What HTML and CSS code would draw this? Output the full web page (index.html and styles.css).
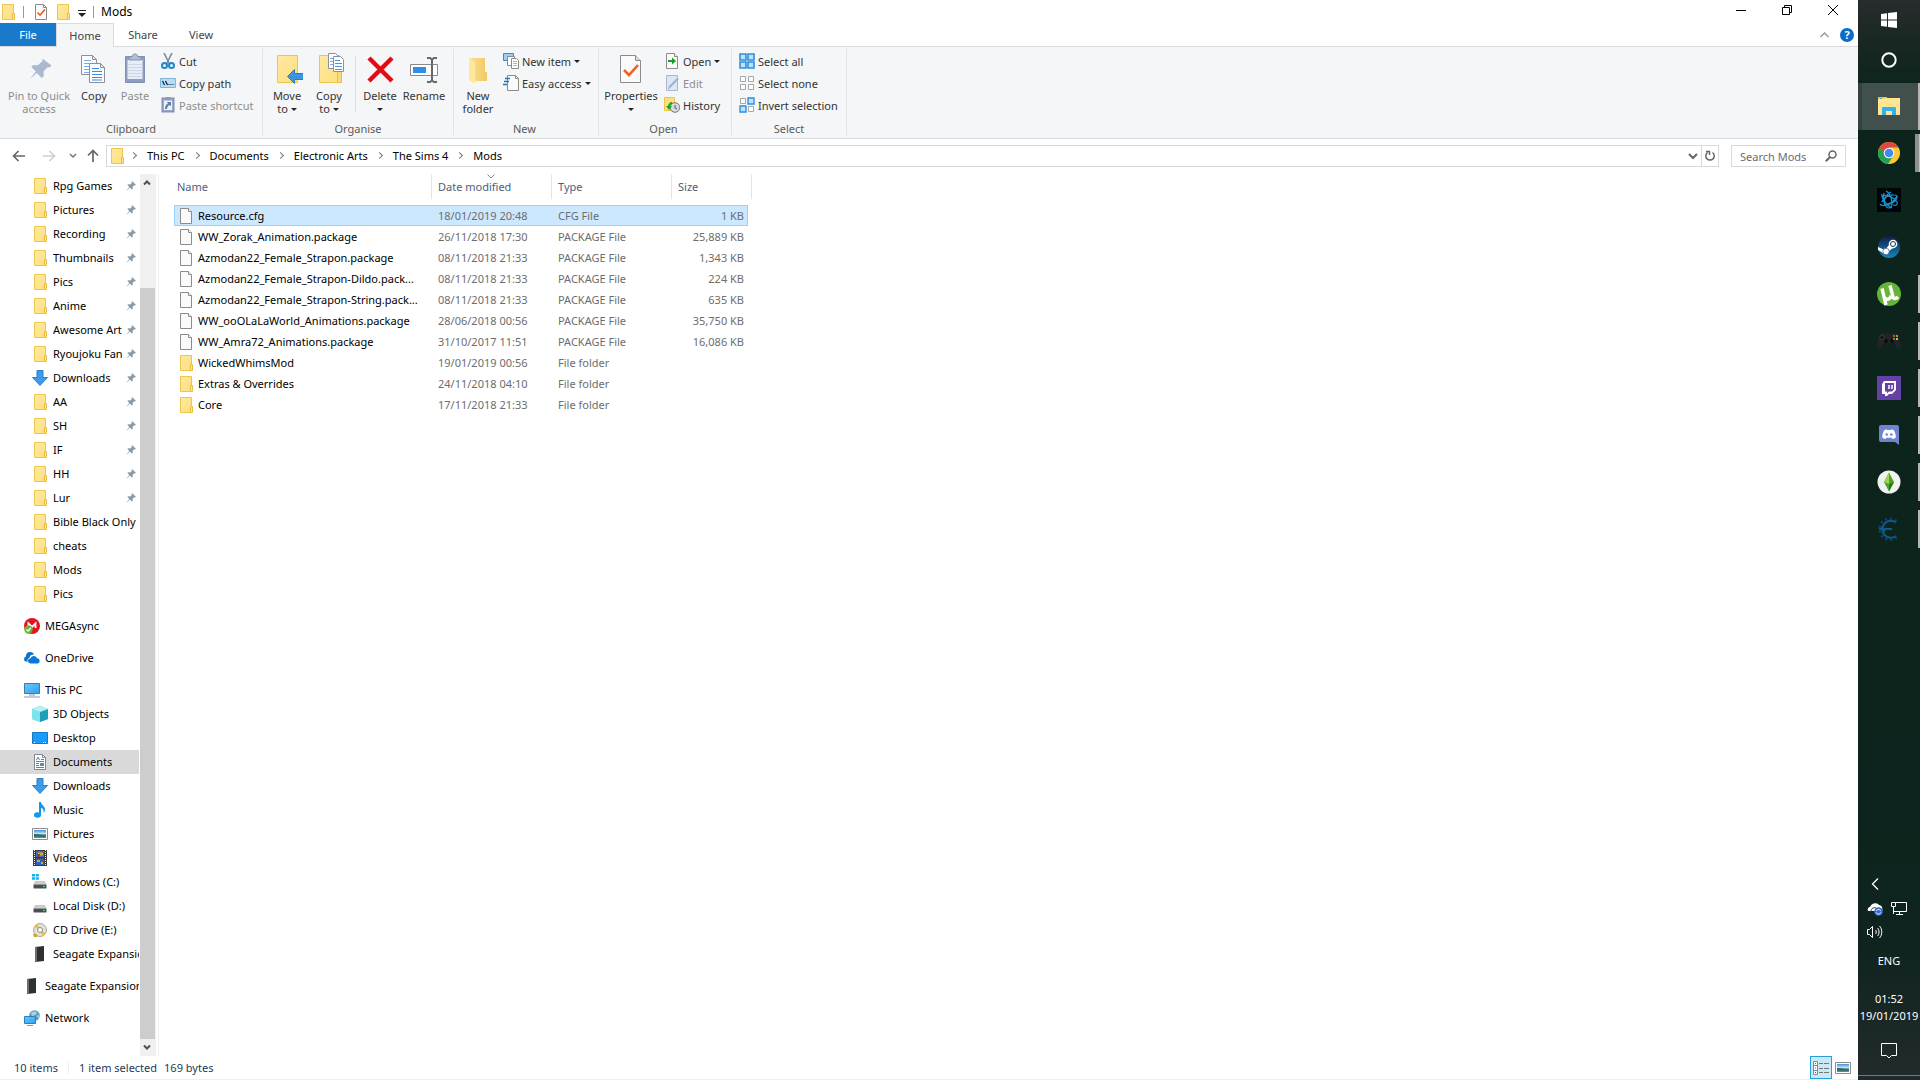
FILE: index.html
```html
<!DOCTYPE html>
<html lang="en">
<head>
    <meta charset="UTF-8">
    <meta name="viewport" content="width=device-width, initial-scale=1.0">
    <title>Mods</title>
    <link rel="stylesheet" href="styles.css">
</head>
<body>
    <!-- icons -->
    <svg class="defs" width="0" height="0">
        <defs>
            <linearGradient id="gFolder" x1="0" y1="0" x2="1" y2="1">
                <stop offset="0" stop-color="#ffe9a3"/><stop offset="1" stop-color="#fddf7c"/>
            </linearGradient>
            <linearGradient id="gFold2" x1="0" y1="0" x2="1" y2="0">
                <stop offset="0" stop-color="#fbe08f"/><stop offset="1" stop-color="#f0c966"/>
            </linearGradient>
            <linearGradient id="gPc" x1="0" y1="0" x2="1" y2="1">
                <stop offset="0" stop-color="#6cc8fb"/><stop offset="1" stop-color="#2f9ff0"/>
            </linearGradient>
            <linearGradient id="gSteam" x1="0" y1="0" x2="0" y2="1">
                <stop offset="0" stop-color="#111d4a"/><stop offset="1" stop-color="#1387b8"/>
            </linearGradient>
            <linearGradient id="gPhoto" x1="0" y1="0" x2="0" y2="1">
                <stop offset="0" stop-color="#3f8fe0"/><stop offset="0.5" stop-color="#d5ecfa"/><stop offset="0.6" stop-color="#3d7a6c"/><stop offset="1" stop-color="#4a8fc0"/>
            </linearGradient>
        </defs>
        <symbol id="folder" viewBox="0 0 16 16">
            <path d="M2.5.5h11v15h-11z" fill="url(#gFolder)" stroke="#edc64c"/>
            <path d="M12.5 9.5h2v6h-2z" fill="#ffe79a" stroke="#e8be46"/>
        </symbol>
        <symbol id="file" viewBox="0 0 16 16">
            <path d="M2.5.5h8l3 3v12h-11z" fill="#fafafa" stroke="#8b8b8b"/>
            <path d="M10.5.5v3h3" fill="#fff" stroke="#8b8b8b"/>
        </symbol>
        <symbol id="check" viewBox="0 0 16 16">
            <path d="M2.5.5h8l3 3v12h-11z" fill="#fafafa" stroke="#8b8b8b"/>
            <path d="M10.5.5v3h3" fill="none" stroke="#8b8b8b"/>
            <path d="M4.5 8.5L7 11l5-5.5" fill="none" stroke="#f05a1a" stroke-width="1.6"/>
        </symbol>
        <symbol id="pin" viewBox="0 0 10 10">
            <path d="M6 0l4 4-1.2.4-.6-.2L6.7 5.7l.1 2.3-.9.6-2-2L.6 9.5 0 10l.5-.8L3.3 6 1.4 4.1l.6-.8 2.3.1L5.8 2l-.2-.8z" fill="#8b99a4"/>
        </symbol>
        <symbol id="down" viewBox="0 0 16 16">
            <path d="M5 .5h6v7h4.5l-7.5 8-7.5-8H5z" fill="#3c9be8" stroke="#2a7fc8"/>
        </symbol>
        <symbol id="mega" viewBox="0 0 16 16">
            <circle cx="8" cy="8" r="8" fill="#e3141d"/>
            <path d="M4.5 10V5.5L8 9l3.5-3.5V10" fill="none" stroke="#fff" stroke-width="1.8"/>
            <circle cx="4.5" cy="11.5" r="4.2" fill="#6cb33f"/>
            <path d="M2.5 11.5L4 13l2.8-3" fill="none" stroke="#fff" stroke-width="1.3"/>
        </symbol>
        <symbol id="cloud" viewBox="0 0 16 16">
            <path d="M1.6 11.5A2.6 2.6 0 0 1 2 6.6 4.3 4.3 0 0 1 10.2 4.5 4 4 0 0 0 5.5 7.7 2.7 2.7 0 0 0 4 11.5z" fill="#0f6fc9"/>
            <path d="M6.6 13.5a2.5 2.5 0 0 1-.2-5 3.5 3.5 0 0 1 6.6-.3 2.7 2.7 0 0 1 .7 5.3z" fill="#0a78d8"/>
        </symbol>
        <symbol id="pc" viewBox="0 0 16 16">
            <path d="M.5 1.5h15v10H.5z" fill="url(#gPc)" stroke="#3b7ca8"/>
            <path d="M5 13h6M0 15h16" stroke="#8d9aa5"/>
        </symbol>
        <symbol id="cube" viewBox="0 0 16 16">
            <path d="M0 3l8-3 8 3v10l-8 3-8-3z" fill="#35c1d6"/>
            <path d="M0 3l8 3v10l-8-3z" fill="#7fe3ec"/>
            <path d="M16 3L8 6v10l8-3z" fill="#1ba1ba"/>
            <path d="M0 3l8-3 8 3-8 3z" fill="#b6f2f5"/>
        </symbol>
        <symbol id="desk" viewBox="0 0 16 16">
            <path d="M.5 2.5h15v11H.5z" fill="#1a9bfc" stroke="#1278c8"/>
            <path d="M2 12.5h1M11 12.5h1M13 12.5h1" stroke="#fff"/>
        </symbol>
        <symbol id="doc" viewBox="0 0 16 16">
            <path d="M2.5.5h8l3 3v12h-11z" fill="#fff" stroke="#7d8a93"/>
            <path d="M10.5.5v3h3" fill="none" stroke="#7d8a93"/>
            <path d="M4.5 6L6 3l1.5 3M9 5.5h3M4 7.5h8M4 9.5h3M4 11.5h3M4 13.5h8" fill="none" stroke="#3a8fcb"/>
            <path d="M8 9h4v3H8z" fill="#4a94b4"/>
        </symbol>
        <symbol id="music" viewBox="0 0 16 16">
            <ellipse cx="5.5" cy="13" rx="3.5" ry="2.7" fill="#1296f0"/>
            <path d="M7 0h2c.2 3 4 4 4 7.5 0 1.5-.5 2.5-1.5 3.5.7-3-.5-4.5-2.500-5V13H7z" fill="#1296f0"/>
        </symbol>
        <symbol id="photo" viewBox="0 0 16 16">
            <path d="M.5 2.5h15v11H.5z" fill="#fff" stroke="#8d8d8d"/>
            <path d="M2 4h12v8H2z" fill="url(#gPhoto)"/>
            <path d="M2 8c4 0 6 1 12 1.5v1H2z" fill="#2f6a60"/>
        </symbol>
        <symbol id="video" viewBox="0 0 16 16">
            <path d="M1 0h14v16H1z" fill="#3b3b3b"/>
            <path d="M4 1h8v6H4z" fill="#3f6fc4"/><path d="M4 8.5h8V15H4z" fill="#2f5fc0"/>
            <path d="M6 2.5h5v3H6z" fill="#d8a928"/><path d="M5 4h3v3H5z" fill="#a33b2c"/><path d="M5 10h3v2H5zM9 12h2v2H9z" fill="#d8a928"/>
            <path d="M2.5 0v16M13.5 0v16" stroke="#f0f0f0" stroke-dasharray="1 1"/>
        </symbol>
        <symbol id="drive" viewBox="0 0 16 16">
            <path d="M3 7h10l1.5 3.5h-13z" fill="#c9cccd"/>
            <path d="M1.5 10.5h13v4h-13z" fill="#4b4f51"/>
            <path d="M11 12.5h2" stroke="#46e05c"/>
        </symbol>
        <symbol id="windrive" viewBox="0 0 16 16">
            <use href="#drive"/>
            <path d="M0 0h3v2.5H0zM3.8 0h3v2.5h-3zM0 3.3h3v2.5H0zM3.8 3.3h3v2.5h-3z" fill="#11b1ea"/>
        </symbol>
        <symbol id="disc" viewBox="0 0 16 16">
            <circle cx="8" cy="8" r="6.5" fill="#e4e2d8" stroke="#a9a79d"/>
            <path d="M8 8L2 4.5 5.5 2zM8 8l6 3.5-3.5 2.5z" fill="#e9bf3a"/>
            <circle cx="8" cy="8" r="2.5" fill="#fff" stroke="#8e8b80"/>
            <path d="M1 12h4v3H2z" fill="#caa72e"/>
        </symbol>
        <symbol id="seagate" viewBox="0 0 16 16">
            <path d="M3 1l9-1v15l-9 1z" fill="#2e3032"/>
            <path d="M3 1l2-.2v15L3 16z" fill="#6c6f71"/>
        </symbol>
        <symbol id="network" viewBox="0 0 16 16">
            <circle cx="10.5" cy="5.5" r="5.3" fill="#5a9cc4"/>
            <path d="M7 3c2-2 5-2 6 0l-2 2-3 1zM12 6l3-1v3z" fill="#a9d3e4"/>
            <path d="M.5 6.5h11v7H.5z" fill="url(#gPc)" stroke="#2f7fb8"/>
            <path d="M3 15.5h6" stroke="#8d9aa5"/>
        </symbol>
        <symbol id="two" viewBox="0 0 24 28">
            <path d="M.5.5h11l4 4v15H.5zM11.5.5v4h4" fill="#fafcff" stroke="#8c9199"/>
            <path d="M3 5.5h7M3 8.5h10M3 11.5h5M3 14.5h5M3 17.5h5" stroke="#7aaeea"/>
            <path d="M8.5 8.5h11l4 4v15h-15zM19.5 8.5v4h4" fill="#fafcff" stroke="#8c9199"/>
            <path d="M11 13.5h7M11 16.5h10M11 19.5h10M11 22.5h10M11 25h10" stroke="#3c8ce4"/>
        </symbol>
    </svg>

    <main class="window">
        <header class="titlebar">
            <svg class="ic"><use href="#folder"/></svg>
            <i class="bar"></i>
            <svg class="ic"><use href="#check"/></svg>
            <svg class="ic"><use href="#folder"/></svg>
            <svg class="qat" viewBox="0 0 8 8"><path d="M0 .5h8" stroke="#222"/><path d="M0 3h8L4 7z" fill="#222"/></svg>
            <i class="bar"></i>
            <h1>Mods</h1>
            <div class="controls">
                <button aria-label="Minimise"><svg viewBox="0 0 10 10"><path d="M0 5.5h10" stroke="#000"/></svg></button>
                <button aria-label="Restore"><svg viewBox="0 0 10 10"><path d="M.5 2.5h7v7h-7zM2.5 2.5v-2h7v7h-2" fill="none" stroke="#000"/></svg></button>
                <button aria-label="Close"><svg viewBox="0 0 10 10"><path d="M0 0l10 10M10 0L0 10" stroke="#000"/></svg></button>
            </div>
        </header>

        <nav class="tabs">
            <button class="file">File</button>
            <button class="on">Home</button>
            <button>Share</button>
            <button>View</button>
            <div class="help">
                <svg class="up" viewBox="0 0 9 6"><path d="M.5 5l4-4 4 4" fill="none" stroke="#9a9a9a" stroke-width="1.5"/></svg>
                <button class="q" aria-label="Help">?</button>
            </div>
        </nav>

        <section class="ribbon">
            <div class="group clipboard">
                <div class="tools">
                    <button class="big w78 off">
                        <svg viewBox="0 0 32 32"><path d="M20 7l8.500 6.500-2 2-2-.3-4 4.300.3 4.500-2 2-5-5-7 6 6-7.500-4.500-4.800 2-1.700 4.500.3 4.800-4.300-.5-1.500z" fill="#a9b9cf"/></svg>
                        <span>Pin to Quick access</span>
                    </button>
                    <button class="big w32">
                        <svg viewBox="-3 -3 32 32"><use href="#two" width="24" height="28"/></svg>
                        <span>Copy</span>
                    </button>
                    <button class="big w50 off">
                        <svg viewBox="0 0 32 32"><path d="M6.5 4.5h19v26h-19z" fill="#8c9fc0" stroke="#7f92b5"/><path d="M8.5 8h15v19h-15z" fill="#e8eef8"/><path d="M9 12.5h14M9 15.5h14M9 18.5h14M9 21.5h14M9 24.5h14" stroke="#cbd6e8"/><path d="M10 5h3c0-4 6-4 6 0h3v3H10z" fill="#b3bfd4" stroke="#8393b0"/></svg>
                        <span>Paste</span>
                    </button>
                    <div class="col">
                        <button><svg viewBox="0 0 16 16"><path d="M4 0l5.5 11M12 0L6.5 11" stroke="#7c8a97" stroke-width="1.6"/><circle cx="4.5" cy="12.5" r="2.5" fill="none" stroke="#1e88d2" stroke-width="2"/><circle cx="11.5" cy="12.5" r="2.5" fill="none" stroke="#1e88d2" stroke-width="2"/></svg>Cut</button>
                        <button><svg viewBox="0 0 16 16"><path d="M.5 3.5h15v9H.5z" fill="#b9dcf6" stroke="#7fb5dd"/><path d="M2.5 6l2 4M5.5 6l2 4" stroke="#123" stroke-width="1.2"/><path d="M8.5 9.5h1M10.5 9.5h1M12.5 9.5h1" stroke="#123"/></svg>Copy path</button>
                        <button class="off"><svg viewBox="0 0 16 16"><path d="M2.5 1.5h11v13h-11z" fill="#b8c5da" stroke="#8494b4" stroke-width="2"/><path d="M5.5 0h5v3h-5z" fill="#8c9bb8"/><path d="M4 4h8v9H4z" fill="#eaf0f8"/><path d="M5 12c0-3 1-5 3-5l-1-2h4v4L9.5 8C8 9 7 10 7 12z" fill="#5f7cab"/></svg>Paste shortcut</button>
                    </div>
                </div>
                <div class="caption">Clipboard</div>
            </div>

            <div class="group organise">
                <div class="tools">
                    <button class="big w42">
                        <svg viewBox="0 0 32 32"><path d="M6.5 3.5h20v27h-20z" fill="url(#gFolder)" stroke="#edc64c"/><path d="M16.5 24.5l7-7v4h9v6h-9v4z" fill="#3a96e0" stroke="#2a7ec4"/></svg>
                        <span>Move<br>to<i class="caret"></i></span>
                    </button>
                    <button class="big w42">
                        <svg viewBox="0 0 32 32"><path d="M6.5 3.5h20v27h-20z" fill="url(#gFolder)" stroke="#edc64c"/><path d="M24.5 17.5h4v13h-4z" fill="#fbd97a" stroke="#e8be46"/><path d="M15.5 1.5h7l3 3v12h-10z" fill="#fff" stroke="#8c9199"/><path d="M17 6.5h5M17 9.5h3M17 12.5h3" stroke="#7aaeea"/><path d="M20.5 4.5h7l3 3v12h-10z" fill="#fff" stroke="#8c9199"/><path d="M22 8.5h5M22 11.5h7M22 14.5h7M22 17.5h7" stroke="#4b93e4"/></svg>
                        <span>Copy<br>to<i class="caret"></i></span>
                    </button>
                    <i class="split"></i>
                    <button class="big w42">
                        <svg viewBox="0 0 32 32"><path d="M5 6l23 23M28 6L5 29" stroke="#e30b13" stroke-width="4.5"/></svg>
                        <span>Delete<br><i class="caret below"></i></span>
                    </button>
                    <button class="big w46">
                        <svg viewBox="0 0 32 32"><path d="M2.5 12.5h27v11h-27z" fill="#fff" stroke="#8a8a8a"/><path d="M5 15h13v6H5z" fill="#2e8fe8"/><path d="M19 6h3l2 1.5L26 6h3M24 7v22M19 30h3l2-1.5 2 1.5h3" fill="none" stroke="#686868" stroke-width="2"/></svg>
                        <span>Rename</span>
                    </button>
                </div>
                <div class="caption">Organise</div>
            </div>

            <div class="group new">
                <div class="tools">
                    <button class="big w42">
                        <svg viewBox="0 0 32 32"><path d="M8 6h15v14h2v9H12z" fill="url(#gFold2)"/><path d="M7 6l6 4v22l-6-4z" fill="#ffe79c"/></svg>
                        <span>New folder</span>
                    </button>
                    <div class="col">
                        <button><svg viewBox="0 0 16 16"><path d="M.5.5h10v7H.5z" fill="#9cd0f4" stroke="#4a86ae"/><path d="M4.5 3.5h7v9h-7z" fill="#fff" stroke="#8b8b8b"/><path d="M8.5 5.5h5l2 2v8h-7z" fill="#fff" stroke="#8b8b8b"/><path d="M10 8.5h4M10 10.5h4M10 12.5h4" stroke="#9cb8dc"/></svg>New item<i class="caret"></i></button>
                        <button><svg viewBox="0 0 16 16"><path d="M4.5.5h8l3 3v12h-11z" fill="#fafafa" stroke="#8b8b8b"/><path d="M12.5.5v3h3" fill="none" stroke="#8b8b8b"/><path d="M2 3.5h5M1 6.5h5M0 9.5h4" stroke="#2374b4" stroke-width="1.5"/></svg>Easy access<i class="caret"></i></button>
                    </div>
                </div>
                <div class="caption">New</div>
            </div>

            <div class="group open">
                <div class="tools">
                    <button class="big w64">
                        <svg viewBox="0 0 32 32"><path d="M5.5 3.5h15l5 5v22h-20z" fill="#fafafa" stroke="#8b8b8b"/><path d="M20.5 3.5v5h5" fill="#ddd" stroke="#8b8b8b"/><path d="M9 18l5 5 9-10" fill="none" stroke="#f4601c" stroke-width="2.6"/></svg>
                        <span>Properties<br><i class="caret below"></i></span>
                    </button>
                    <div class="col">
                        <button><svg viewBox="0 0 16 16"><use href="#file"/><path d="M4 7h4V4.5L12 8l-4 3.5V9H4z" fill="#14a01c"/></svg>Open<i class="caret"></i></button>
                        <button class="off"><svg viewBox="0 0 16 16"><path d="M2.5.5h11v15h-11z" fill="#dde6f4" stroke="#a9b8d2"/><path d="M15 4L7 12l-3 3 1-4 8-8z" fill="#9fb1cf"/></svg>Edit</button>
                        <button><svg viewBox="0 0 16 16"><path d="M.5.5h10v13H.5z" fill="#fddf7c" stroke="#edc64c"/><circle cx="11" cy="10.5" r="4.8" fill="#d6dade" stroke="#777"/><path d="M11 8v3l2 1" fill="none" stroke="#555"/><path d="M2 9h2c0-2 2-4 4-4v2c-1 0-2 1-2 2h2l-3 4z" fill="#18a62a"/></svg>History</button>
                    </div>
                </div>
                <div class="caption">Open</div>
            </div>

            <div class="group select">
                <div class="tools">
                    <div class="col">
                        <button><svg viewBox="0 0 16 16"><path d="M1 1h6v6H1zM9 1h6v6H9zM1 9h6v6H1zM9 9h6v6H9z" fill="#bfe1fa" stroke="#2f8fe0" stroke-width="1.6"/></svg>Select all</button>
                        <button><svg viewBox="0 0 16 16"><path d="M1.5 1.5h5v5h-5zM9.5 1.5h5v5h-5zM1.5 9.5h5v5h-5zM9.5 9.5h5v5h-5z" fill="#fff" stroke="#a6a6a6"/></svg>Select none</button>
                        <button><svg viewBox="0 0 16 16"><path d="M1.5 1.5h5v5h-5zM9.5 9.5h5v5h-5z" fill="#fff" stroke="#a6a6a6"/><path d="M9 1h6v6H9zM1 9h6v6H1z" fill="#bfe1fa" stroke="#2f8fe0" stroke-width="1.4"/></svg>Invert selection</button>
                    </div>
                </div>
                <div class="caption">Select</div>
            </div>
        </section>

        <section class="address">
            <button class="back" aria-label="Back"><svg viewBox="0 0 14 14"><path d="M1 7h12M6.5 2l-5 5 5 5" fill="none" stroke="#666" stroke-width="1.7"/></svg></button>
            <button class="forward" aria-label="Forward"><svg viewBox="0 0 14 14"><path d="M1 7h12M7.5 2l5 5-5 5" fill="none" stroke="#d0d0d0" stroke-width="1.7"/></svg></button>
            <button class="recent" aria-label="Recent locations"><svg viewBox="0 0 14 14"><path d="M4 5l3 3 3-3" fill="none" stroke="#777" stroke-width="1.5"/></svg></button>
            <button class="upward" aria-label="Up"><svg viewBox="0 0 14 14"><path d="M7 1v12M2 6.5l5-5 5 5" fill="none" stroke="#666" stroke-width="1.7"/></svg></button>
            <div class="crumbs">
                <svg class="ic"><use href="#folder"/></svg>
                <a href="#">This PC</a>
                <a href="#">Documents</a>
                <a href="#">Electronic Arts</a>
                <a href="#">The Sims 4</a>
                <a href="#">Mods</a>
                <button class="drop" aria-label="Previous locations"><svg viewBox="0 0 10 10"><path d="M1 3l4 4 4-4" fill="none" stroke="#666" stroke-width="2"/></svg></button>
                <button class="refresh" aria-label="Refresh"><svg viewBox="0 0 12 12"><path d="M8.5 2.5a4.200 4.200 0 1 1-5 0M2 1.500h3.500V5" fill="none" stroke="#666" stroke-width="1.5"/></svg></button>
            </div>
            <label class="search">
                <input type="text" placeholder="Search Mods" aria-label="Search Mods">
                <svg viewBox="0 0 12 12"><circle cx="7.5" cy="4.5" r="3.5" fill="none" stroke="#666" stroke-width="1.5"/><path d="M5 7L.8 11.2" stroke="#666" stroke-width="2"/></svg>
            </label>
        </section>

        <section class="content">
            <nav class="tree">
                <a href="#" class="sub"><svg class="ic"><use href="#folder"/></svg><span>Rpg Games</span><svg class="pin"><use href="#pin"/></svg></a>
                <a href="#" class="sub"><svg class="ic"><use href="#folder"/></svg><span>Pictures</span><svg class="pin"><use href="#pin"/></svg></a>
                <a href="#" class="sub"><svg class="ic"><use href="#folder"/></svg><span>Recording</span><svg class="pin"><use href="#pin"/></svg></a>
                <a href="#" class="sub"><svg class="ic"><use href="#folder"/></svg><span>Thumbnails</span><svg class="pin"><use href="#pin"/></svg></a>
                <a href="#" class="sub"><svg class="ic"><use href="#folder"/></svg><span>Pics</span><svg class="pin"><use href="#pin"/></svg></a>
                <a href="#" class="sub"><svg class="ic"><use href="#folder"/></svg><span>Anime</span><svg class="pin"><use href="#pin"/></svg></a>
                <a href="#" class="sub"><svg class="ic"><use href="#folder"/></svg><span>Awesome Art</span><svg class="pin"><use href="#pin"/></svg></a>
                <a href="#" class="sub"><svg class="ic"><use href="#folder"/></svg><span>Ryoujoku Fan</span><svg class="pin"><use href="#pin"/></svg></a>
                <a href="#" class="sub"><svg class="ic"><use href="#down"/></svg><span>Downloads</span><svg class="pin"><use href="#pin"/></svg></a>
                <a href="#" class="sub"><svg class="ic"><use href="#folder"/></svg><span>AA</span><svg class="pin"><use href="#pin"/></svg></a>
                <a href="#" class="sub"><svg class="ic"><use href="#folder"/></svg><span>SH</span><svg class="pin"><use href="#pin"/></svg></a>
                <a href="#" class="sub"><svg class="ic"><use href="#folder"/></svg><span>IF</span><svg class="pin"><use href="#pin"/></svg></a>
                <a href="#" class="sub"><svg class="ic"><use href="#folder"/></svg><span>HH</span><svg class="pin"><use href="#pin"/></svg></a>
                <a href="#" class="sub"><svg class="ic"><use href="#folder"/></svg><span>Lur</span><svg class="pin"><use href="#pin"/></svg></a>
                <a href="#" class="sub"><svg class="ic"><use href="#folder"/></svg><span>Bible Black Only</span></a>
                <a href="#" class="sub"><svg class="ic"><use href="#folder"/></svg><span>cheats</span></a>
                <a href="#" class="sub"><svg class="ic"><use href="#folder"/></svg><span>Mods</span></a>
                <a href="#" class="sub"><svg class="ic"><use href="#folder"/></svg><span>Pics</span></a>
                <a href="#" class="top"><svg class="ic"><use href="#mega"/></svg><span>MEGAsync</span></a>
                <a href="#" class="top"><svg class="ic"><use href="#cloud"/></svg><span>OneDrive</span></a>
                <a href="#" class="top"><svg class="ic"><use href="#pc"/></svg><span>This PC</span></a>
                <a href="#" class="sub"><svg class="ic"><use href="#cube"/></svg><span>3D Objects</span></a>
                <a href="#" class="sub"><svg class="ic"><use href="#desk"/></svg><span>Desktop</span></a>
                <a href="#" class="sub on"><svg class="ic"><use href="#doc"/></svg><span>Documents</span></a>
                <a href="#" class="sub"><svg class="ic"><use href="#down"/></svg><span>Downloads</span></a>
                <a href="#" class="sub"><svg class="ic"><use href="#music"/></svg><span>Music</span></a>
                <a href="#" class="sub"><svg class="ic"><use href="#photo"/></svg><span>Pictures</span></a>
                <a href="#" class="sub"><svg class="ic"><use href="#video"/></svg><span>Videos</span></a>
                <a href="#" class="sub"><svg class="ic"><use href="#windrive"/></svg><span>Windows (C:)</span></a>
                <a href="#" class="sub"><svg class="ic"><use href="#drive"/></svg><span>Local Disk (D:)</span></a>
                <a href="#" class="sub"><svg class="ic"><use href="#disc"/></svg><span>CD Drive (E:)</span></a>
                <a href="#" class="sub"><svg class="ic"><use href="#seagate"/></svg><span>Seagate Expansion</span></a>
                <a href="#" class="top"><svg class="ic"><use href="#seagate"/></svg><span>Seagate Expansion</span></a>
                <a href="#" class="top"><svg class="ic"><use href="#network"/></svg><span>Network</span></a>
            </nav>
            <div class="scroll">
                <svg viewBox="0 0 10 10"><path d="M2 7l3-3 3 3" fill="none" stroke="#505050" stroke-width="2"/></svg>
                <div class="thumb"></div>
                <svg viewBox="0 0 10 10"><path d="M2 3l3 3 3-3" fill="none" stroke="#505050" stroke-width="2"/></svg>
            </div>
            <div class="list">
                <table>
                    <thead>
                        <tr><th class="name">Name</th><th class="date"><svg class="sort" viewBox="0 0 8 5"><path d="M.5.5L4 4l3.500-3.500" fill="none" stroke="#8a8a8a"/></svg>Date modified</th><th class="type">Type</th><th class="size">Size</th></tr>
                    </thead>
                    <tbody>
                        <tr class="on"><td><svg class="ic"><use href="#file"/></svg>Resource.cfg</td><td>18/01/2019 20:48</td><td>CFG File</td><td>1 KB</td></tr>
                        <tr><td><svg class="ic"><use href="#file"/></svg>WW_Zorak_Animation.package</td><td>26/11/2018 17:30</td><td>PACKAGE File</td><td>25,889 KB</td></tr>
                        <tr><td><svg class="ic"><use href="#file"/></svg>Azmodan22_Female_Strapon.package</td><td>08/11/2018 21:33</td><td>PACKAGE File</td><td>1,343 KB</td></tr>
                        <tr><td><svg class="ic"><use href="#file"/></svg>Azmodan22_Female_Strapon-Dildo.pack...</td><td>08/11/2018 21:33</td><td>PACKAGE File</td><td>224 KB</td></tr>
                        <tr><td><svg class="ic"><use href="#file"/></svg>Azmodan22_Female_Strapon-String.pack...</td><td>08/11/2018 21:33</td><td>PACKAGE File</td><td>635 KB</td></tr>
                        <tr><td><svg class="ic"><use href="#file"/></svg>WW_ooOLaLaWorld_Animations.package</td><td>28/06/2018 00:56</td><td>PACKAGE File</td><td>35,750 KB</td></tr>
                        <tr><td><svg class="ic"><use href="#file"/></svg>WW_Amra72_Animations.package</td><td>31/10/2017 11:51</td><td>PACKAGE File</td><td>16,086 KB</td></tr>
                        <tr><td><svg class="ic"><use href="#folder"/></svg>WickedWhimsMod</td><td>19/01/2019 00:56</td><td>File folder</td><td></td></tr>
                        <tr><td><svg class="ic"><use href="#folder"/></svg>Extras &amp; Overrides</td><td>24/11/2018 04:10</td><td>File folder</td><td></td></tr>
                        <tr><td><svg class="ic"><use href="#folder"/></svg>Core</td><td>17/11/2018 21:33</td><td>File folder</td><td></td></tr>
                    </tbody>
                </table>
            </div>
        </section>

        <footer class="status">
            <span class="count">10 items</span>
            <span>1 item selected</span>
            <span>169 bytes</span>
            <div class="views">
                <button class="on" aria-label="Details"><svg viewBox="0 0 16 14"><path d="M.5.5h4v13h-4zM.5 4.5h4M.5 9.5h4" fill="#fff" stroke="#888"/><path d="M2 2.5h1M2 7h1" stroke="#2a7ad0"/><path d="M2 11.5h1" stroke="#d22"/><path d="M6 2.5h4M11 2.5h5M6 7.5h4M11 7.5h5M6 11.5h4M11 11.5h5" stroke="#777"/></svg></button>
                <button aria-label="Large icons"><svg viewBox="0 1 16 14"><use href="#photo" width="16" height="16"/></svg></button>
            </div>
        </footer>
    </main>

    <aside class="taskbar">
        <button class="sys" aria-label="Start"><svg viewBox="0 0 16 16"><path d="M0 2l6-.8v6.3H0zM7 1l9-1v7.5H7zM0 8.5h6v6.3L0 14zM7 8.5h9V16l-9-1z" fill="#fff"/></svg></button>
        <button class="sys" aria-label="Cortana"><svg viewBox="0 0 16 16"><circle cx="8" cy="8" r="6.7" fill="none" stroke="#fff" stroke-width="2"/></svg></button>
        <button class="app active" aria-label="File Explorer"><svg viewBox="0 0 24 24"><path d="M1 3h9v3H1z" fill="#f2bd2c"/><path d="M1 5l9-1h13v17H1z" fill="#ffe694"/><path d="M5 21v-7q0-1 1-1h12q1 0 1 1v7h-4v-4H9v4z" fill="#36b0e8"/><path d="M3 4.5h2" stroke="#36b0e8"/></svg></button>
        <button class="app run many" aria-label="Chrome"><svg viewBox="0 0 24 24"><circle cx="12" cy="12" r="11" fill="#fcc934"/><path d="M2.5 6.5a11 11 0 0 1 19 0H12L8 14z" fill="#dc4a3d"/><path d="M2.5 6.5A11 11 0 0 0 11 23l5.5-8.5-5 1.5z" fill="#24a056"/><circle cx="12" cy="12" r="5.3" fill="#fff"/><circle cx="12" cy="12" r="4.3" fill="#4587f0"/></svg></button>
        <button class="app" aria-label="Battle.net"><svg viewBox="0 0 24 24"><path d="M0 0h24v24H0z" fill="#020507"/><g fill="none" stroke="#1595d8" stroke-width="1.2"><path d="M9 3c3 1 6 7 6 12 0 3-1 5-3 5-4 0-7-9-5-15M3 16c1 3 11 1 15-3 3-3 3-6-1-6C13 6 6 10 5 14"/><path d="M5 8c4-2 12 1 15 6 1 3-1 4-4 3M5 6c-1 4 4 11 10 14M20 8c-2 4-7 8-13 9M14 4c-3 1-7 6-7 10"/></g></svg></button>
        <button class="app" aria-label="Steam"><svg viewBox="0 0 24 24"><circle cx="12" cy="12" r="11" fill="url(#gSteam)"/><path d="M1 12l7 3 4-5 4 3-4 3-3 3-3-1-5-3z" fill="#fff"/><circle cx="16" cy="9" r="4.3" fill="#fff"/><circle cx="16" cy="9" r="2.5" fill="none" stroke="#173564"/><circle cx="9" cy="16.5" r="3.2" fill="#fff" stroke="#17447a" stroke-width=".6"/></svg></button>
        <button class="app run" aria-label="uTorrent"><svg viewBox="0 0 24 24"><circle cx="12" cy="12" r="12" fill="#67b33a"/><path d="M5 6.5L9 23M7.5 15.5c2 3 6 2 6.5-2M13 3.5l3 11.5c.5 2 3 2 5 0" fill="none" stroke="#fff" stroke-width="3.4"/></svg></button>
        <button class="app run" aria-label="Controller"><svg viewBox="0 0 24 24"><path d="M4 4h4l1 1h6l1-1h4c2 3 4 9 4 14l-2 2c-2 0-4-4-5-6H7c-1 2-3 6-5 6l-2-2C0 13 2 7 4 4z" fill="#232323"/><circle cx="5" cy="8.5" r="2.2" fill="#111" stroke="#3c3c3c"/><circle cx="9" cy="12" r="2" fill="#0d0d0d"/><circle cx="15" cy="12" r="2" fill="#0d0d0d"/><path d="M16 6h2v2h-2z" fill="#e0452c"/><path d="M19 6h2v2h-2z" fill="#72b52e"/><path d="M16 9h2v2h-2z" fill="#2b8fd8"/><path d="M19 9h2v2h-2z" fill="#e8b32a"/></svg></button>
        <button class="app run" aria-label="Twitch"><svg viewBox="0 0 24 24"><path d="M0 0h24v24H0z" fill="#6441a4"/><path d="M7 5h12v9l-4 4h-3l-2 2H8v-2H5V8z" fill="#fff"/><path d="M8 7h9v6.5l-2 2h-3l-2 2v-2H8z" fill="#6441a4"/><path d="M12 9v4M15 9v4" stroke="#fff" stroke-width="1.5"/></svg></button>
        <button class="app run" aria-label="Discord"><svg viewBox="0 0 24 24"><path d="M4 2h16q2 0 2 2v18l-4-3H4q-2 0-2-2V4q0-2 2-2z" fill="#6f84cf"/><path d="M7.5 7l2-.7.6.8h4l.6-.8 2 .7c1.5 2.5 2.2 5 2.2 7.3-1 1-2 1.5-3.4 1.7l-.8-1.3H9.4L8.6 16c-1.4-.2-2.4-.7-3.4-1.7 0-2.3.8-4.8 2.3-7.3z" fill="#fff"/><circle cx="9.7" cy="11.5" r="1.3" fill="#6f84cf"/><circle cx="14.4" cy="11.5" r="1.3" fill="#6f84cf"/></svg></button>
        <button class="app run" aria-label="The Sims 4"><svg viewBox="0 0 24 24"><circle cx="12" cy="12" r="11.5" fill="#f0f2f0"/><path d="M12 2.5l5 9.5-5 9.5L7 12z" fill="#4da32c"/><path d="M12 2.5V14l-5-2z" fill="#9fd257"/><path d="M12 14l5-2-5 9.5z" fill="#27761c"/></svg></button>
        <button class="app run" aria-label="Cheat Engine"><svg viewBox="0 0 24 24"><g fill="none"><path d="M19 5.5A8.5 8.5 0 1 0 19 19" stroke="#11598a" stroke-width="2"/><path d="M19.5 4A10.5 10.5 0 1 0 20 20" stroke="#0c4770" stroke-width="2.5" stroke-dasharray="2 3"/><path d="M2 12h13M5 9.5l3 5" stroke="#11598a" stroke-width="2"/></g></svg></button>

        <div class="tray">
            <svg class="chev" viewBox="0 0 8 12"><path d="M7 .5L1.5 6 7 11.5" fill="none" stroke="#fff" stroke-width="1.3"/></svg>
            <div class="icons">
                <svg viewBox="0 0 16 16"><path d="M1 10C0 7 2 6 3 6c1-4 7-5 9-2 3 0 4 4 3 6z" fill="#fff"/><path d="M4 11c0-4 3-5 5-4" fill="none" stroke="#333"/><circle cx="11.5" cy="10.5" r="4.3" fill="#2e6fd0"/><path d="M9 10c1-2 4-2 5 0M14 11.5c-1 2-4 2-5 0" fill="none" stroke="#fff"/></svg>
                <svg viewBox="0 0 16 16"><path d="M4.5 1.5h11v9h-13v-4M5 13.5h7M8.5 11v2M2.5 6v7M.5 1.5h4v4h-4z" fill="none" stroke="#fff"/></svg>
                <svg viewBox="0 0 16 16"><path d="M.5 5.5h2l3-3v11l-3-3h-2z" fill="none" stroke="#fff"/><path d="M8.5 6c1 1 1 3 0 4M10.5 4c2 2 2 6 0 8M12.5 2c3 3 3 9 0 12" fill="none" stroke="#fff"/></svg>
            </div>
            <span class="lang">ENG</span>
            <time>01:52<br>19/01/2019</time>
            <svg class="action" viewBox="0 0 16 16"><path d="M.5.5h15v12h-5L8 15l-2.5-2.5h-5z" fill="none" stroke="#fff"/></svg>
            <i class="peek"></i>
        </div>
    </aside>
</body>
</html>
```

FILE: styles.css
```css
* { margin: 0; padding: 0; box-sizing: border-box; }
body {
    width: 100%;
    height: 100vh;
    display: flex;
    font-family: "Noto Sans", "Open Sans", sans-serif;
    font-size: 11px;
    line-height: 13px;
    color: #000;
    background: #fff;
    overflow: hidden;
}
button {
    font: inherit;
    color: inherit;
    border: 0;
    background: none;
}
a { color: inherit; text-decoration: none; }
svg { display: block; flex: none; }
.defs { position: absolute; }
.ic { width: 16px; height: 16px; }
.window {
    flex: 1;
    min-width: 0;
    display: flex;
    flex-direction: column;
}

/* title bar */
.titlebar {
    height: 23px;
    display: flex;
    align-items: center;
}
.titlebar .bar {
    width: 1px;
    height: 12px;
    margin: 0 9px 0 7px;
    background: #999;
}
.titlebar .ic + .ic { margin-left: 6px; }
.qat { width: 8px; height: 8px; margin: 4px 0 0 7px; }
.titlebar .qat + .bar { margin-right: 7px; }
.titlebar h1 { font-size: 12px; font-weight: 400; }
.controls {
    margin-left: auto;
    align-self: stretch;
    display: flex;
    padding-right: 2px;
}
.controls button {
    width: 46px;
    display: flex;
    justify-content: center;
    padding-top: 5px;
}
.controls svg { width: 10px; height: 10px; }

/* tabs */
.tabs {
    height: 24px;
    display: flex;
    border-bottom: 1px solid #dadbdc;
}
.tabs > button {
    width: 58px;
    color: #444;
}
.tabs .file {
    width: 56px;
    background: #1979ca;
    color: #fff;
}
.tabs .on {
    height: 24px;
    background: #f5f6f7;
    border: 1px solid #dadbdc;
    border-bottom: 0;
}
.help {
    margin-left: auto;
    display: flex;
    align-items: center;
    gap: 11px;
    padding-right: 4px;
}
.up { width: 9px; height: 6px; }
.q {
    width: 14px;
    height: 14px;
    border-radius: 50%;
    background: #0a6cc8;
    color: #fff;
    font-weight: 700;
    line-height: 14px;
}

/* ribbon */
.ribbon {
    height: 92px;
    display: flex;
    background: #f5f6f7;
    border-bottom: 1px solid #dadbdc;
    color: #333;
}
.group {
    display: flex;
    flex-direction: column;
    justify-content: space-between;
    margin: 2px 0 3px;
    padding-top: 1px;
    border-right: 1px solid #e2e3e4;
}
.clipboard { width: 263px; }
.organise { width: 191px; }
.new { width: 145px; }
.open { width: 133px; }
.select { width: 115px; }
.tools { display: flex; }
.caption {
    text-align: center;
    color: #5a5a5a;
}
.new .caption, .open .caption { padding-right: 3px; }
.big {
    display: flex;
    flex-direction: column;
    align-items: center;
    gap: 5px;
    padding-top: 2px;
}
.big svg { width: 32px; height: 32px; }
.w32 { width: 32px; }
.w42 { width: 42px; }
.w46 { width: 46px; }
.w50 { width: 50px; }
.w64 { width: 64px; }
.w78 { width: 78px; }
.off { color: #8d8d8d; }
.caret {
    display: inline-block;
    border: 3px solid transparent;
    border-top-color: #222;
    border-bottom: 0;
    margin-left: 3px;
    vertical-align: 2px;
}
.caret.below, .col .caret { margin-left: 0; }
.organise .tools, .new .tools { padding-left: 3px; }
.split {
    width: 1px;
    height: 56px;
    margin: 6px 3px 0 5px;
    background: #dcdddf;
}
.col { display: flex; flex-direction: column; }
.col button {
    height: 22px;
    display: flex;
    align-items: center;
    gap: 3px;
    padding-left: 4px;
    white-space: nowrap;
}
.clipboard .col button { padding-left: 0; }
.open .col button { padding-left: 1px; }
.select .col button { padding-left: 7px; }
.col svg { width: 16px; height: 16px; }

/* address row */
.address {
    height: 35px;
    display: flex;
    align-items: center;
    padding: 0 12px 1px;
}
.address > button svg { width: 14px; height: 14px; }
.back { width: 30px; }
.forward { width: 24px; }
.recent, .upward { width: 20px; }
.crumbs {
    flex: 1;
    height: 22px;
    display: flex;
    align-items: center;
    border: 1px solid #d9d9d9;
    padding-left: 2px;
}
.crumbs .ic { margin-right: -3px; }
.crumbs a { padding-bottom: 2px; }
.crumbs a::before {
    content: "";
    display: inline-block;
    width: 4px;
    height: 4px;
    border: solid #777;
    border-width: 1px 1px 0 0;
    transform: rotate(45deg);
    margin: 0 11px 2px 9px;
}
.crumbs button { height: 20px; padding: 0 3px; }
.crumbs .drop { margin-left: auto; }
.crumbs .refresh { border-left: 1px solid #d9d9d9; padding: 0 2px; }
.drop svg { width: 10px; height: 10px; }
.refresh svg { width: 12px; height: 12px; }
.search {
    width: 115px;
    height: 22px;
    display: flex;
    align-items: center;
    margin-left: 12px;
    padding: 0 8px;
    border: 1px solid #d9d9d9;
}
.search input {
    flex: 1;
    min-width: 0;
    border: 0;
    outline: 0;
    font: inherit;
}
.search input::placeholder { color: #6d6d6d; }
.search svg { width: 12px; height: 12px; }

/* content */
.content {
    flex: 1;
    min-height: 0;
    display: flex;
}
.tree {
    width: 139px;
    margin-right: 1px;
    overflow: hidden;
}
.tree a {
    height: 24px;
    display: flex;
    align-items: center;
    gap: 5px;
}
.tree .sub { padding-left: 32px; }
.tree .top { padding-left: 24px; margin-top: 8px; }
.tree .on { background: #d9d9d9; }
.tree span {
    flex: 1;
    overflow: hidden;
    white-space: nowrap;
    line-height: 18px;
}
.tree .pin { width: 10px; height: 10px; margin: 0 3px 0 -2px; }
.scroll {
    width: 16px;
    display: flex;
    flex-direction: column;
    background: #f0f0f0;
}
.scroll svg { width: 10px; height: 17px; margin-left: 2px; }
.thumb {
    flex: 1;
    width: 15px;
    margin-top: 97px;
    background: #cdcdcd;
}
.list {
    flex: 1;
    margin-left: 2px;
    border-left: 1px solid #f0f0f0;
    padding-left: 15px;
}
table {
    width: 574px;
    table-layout: fixed;
    border-collapse: separate;
    border-spacing: 0;
}
th {
    height: 25px;
    text-align: left;
    font-weight: 400;
    color: #4c607a;
    border-right: 1px solid #e5e5e5;
    padding-left: 6px;
    position: relative;
}
.name { width: 258px; padding-left: 3px; }
.date, .type { width: 120px; }
.size { width: 76px; border-right: 0; }
.size::after {
    content: "";
    position: absolute;
    top: 0;
    right: -4px;
    width: 1px;
    height: 25px;
    background: #e5e5e5;
}
.sort {
    position: absolute;
    top: 0;
    left: 55px;
    width: 8px;
    height: 5px;
}
tbody::before {
    content: "";
    display: block;
    height: 6px;
}
td {
    height: 21px;
    padding-left: 6px;
    line-height: 16px;
    color: #6d6d6d;
    white-space: nowrap;
}
td:first-child { padding-left: 4px; color: #000; }
td .ic { display: inline-block; vertical-align: top; margin-right: 4px; }
td:last-child { text-align: right; padding-right: 4px; }
tbody .on {
    background: #cce8ff;
    outline: 1px solid #99d1ff;
    outline-offset: -1px;
}

/* status bar */
.status {
    height: 24px;
    display: flex;
    align-items: center;
    gap: 7px;
    padding-left: 14px;
    border-bottom: 1px solid #f0f0f0;
    color: #1e395b;
}
.count {
    padding-right: 10px;
    margin-right: 3px;
    border-right: 1px solid #f0f0f0;
}
.views { margin-left: auto; display: flex; padding-right: 4px; }
.views button {
    width: 22px;
    height: 23px;
    display: flex;
    align-items: center;
    justify-content: center;
}
.views .on { background: #cbe8f6; border: 1px solid #26a0da; }
.views svg { width: 16px; height: 14px; }

/* taskbar */
.taskbar {
    width: 62px;
    display: flex;
    flex-direction: column;
    background: linear-gradient(#282c2c 0, #1a2824 40px, #0c241c 90px, #0c241d 800px, #10241f 950px, #222b2b 100%);
    color: #fff;
}
.sys, .app {
    display: flex;
    align-items: center;
    justify-content: center;
}
.sys { height: 40px; }
.sys svg { width: 16px; height: 16px; }
.sys + .app { margin-top: 3px; }
.app { height: 47px; padding-bottom: 2px; position: relative; }
.app svg { width: 24px; height: 24px; }
.active {
    background: #41504c;
    box-shadow: inset 4px 0 #33433f, inset -2px 0 #b8b6b2;
}
.run::after {
    content: "";
    position: absolute;
    right: 0;
    top: 4px;
    width: 2px;
    height: 38px;
    background: #b8b6b2;
}
.many::after { width: 4px; border-right: 1px solid #c6c4c0; background: #8d908d; }
.tray {
    margin-top: auto;
    display: flex;
    flex-direction: column;
    align-items: center;
}
.chev { width: 8px; height: 12px; margin: 0 0 11px 13px; align-self: flex-start; }
.icons {
    align-self: stretch;
    display: grid;
    grid-template-columns: 16px 16px;
    gap: 7px 8px;
    padding-left: 9px;
}
.icons svg { width: 16px; height: 16px; }
.lang { margin-top: 14px; }
time { margin-top: 23px; line-height: 17px; text-align: center; }
.action { width: 16px; height: 16px; margin-top: 19px; }
.peek {
    width: 100%;
    height: 5px;
    margin-top: 16px;
    border-top: 1px solid #757b7a;
}
```
